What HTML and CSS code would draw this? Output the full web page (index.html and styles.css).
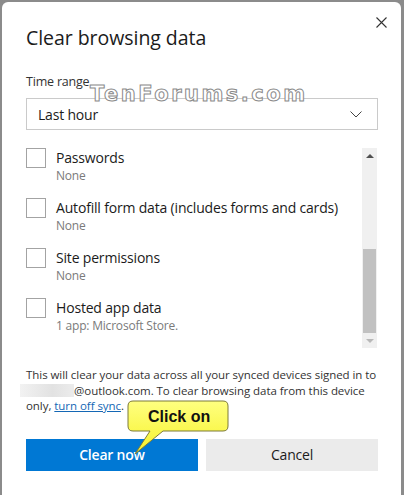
FILE: index.html
```html
<!DOCTYPE html>
<html>
<head>
<meta charset="utf-8">
<link rel="stylesheet" href="styles.css">
</head>
<body>
<div class="dialog">
  <button class="close" aria-label="Close">
    <svg width="11" height="11" viewBox="0 0 11 11"><path d="M0.5 0.5 L10.5 10.5 M10.5 0.5 L0.5 10.5" stroke="#333" stroke-width="1.1" fill="none"/></svg>
  </button>
  <h1 class="title">Clear browsing data</h1>
  <div class="label">Time range</div>
  <div class="select">
    <span>Last hour</span>
    <svg class="chev" width="12" height="7" viewBox="0 0 12 7"><path d="M0.5 0.5 L6 6 L11.5 0.5" stroke="#444" stroke-width="1" fill="none"/></svg>
  </div>
  <div class="watermark">TenForums.com</div>
  <div class="list">
    <div class="items">
      <div class="item"><span class="box"></span><div class="txt"><div class="name">Passwords</div><div class="sub">None</div></div></div>
      <div class="item"><span class="box"></span><div class="txt"><div class="name">Autofill form data (includes forms and cards)</div><div class="sub">None</div></div></div>
      <div class="item"><span class="box"></span><div class="txt"><div class="name">Site permissions</div><div class="sub">None</div></div></div>
      <div class="item"><span class="box"></span><div class="txt"><div class="name">Hosted app data</div><div class="sub">1 app: Microsoft Store.</div></div></div>
    </div>
    <div class="scrollbar">
      <div class="arrow up"></div>
      <div class="track"><div class="thumb"></div></div>
      <div class="arrow down"></div>
    </div>
  </div>
  <p class="note">This will clear your data across all your synced devices signed in to <span class="blur"></span>@outlook.com. To clear browsing data from this device only, <a href="#">turn off sync</a>.</p>
  <div class="buttons">
    <button class="btn primary">Clear now</button>
    <button class="btn secondary">Cancel</button>
  </div>
  <div class="callout">
    <svg width="106" height="60" viewBox="0 0 106 60">
      <defs>
        <linearGradient id="yg" x1="0" y1="0" x2="0" y2="1">
          <stop offset="0" stop-color="#ffff80"/>
          <stop offset="1" stop-color="#f6f22a"/>
        </linearGradient>
      </defs>
      <path d="M7 2 H97 Q102 2 102 7 V27 Q102 32 97 32 H37 L9 55 L24 32 H7 Q2 32 2 27 V7 Q2 2 7 2 Z" fill="url(#yg)" stroke="#7d7a3a" stroke-width="1"/>
    </svg>
    <span class="callout-text">Click on</span>
  </div>
</div>
</body>
</html>
```
FILE: styles.css
```css
html, body { margin: 0; padding: 0; }
body {
  background: #8b8b8b;
  width: 404px;
  height: 495px;
  overflow: hidden;
  font-family: "Open Sans", "Noto Sans", sans-serif;
}
.dialog {
  position: relative;
  margin: 2px 3px 0 2px;
  height: 493px;
  background: #fff;
  border-radius: 6px 6px 0 0;
  padding: 0 23px 0 24px;
  box-sizing: border-box;
  color: #1a1a1a;
}
.close {
  position: absolute;
  right: 14px;
  top: 15px;
  background: none;
  border: 0;
  padding: 0;
  width: 11px;
  height: 11px;
  display: block;
}
.close svg { display: block; }
.title {
  margin: 0;
  padding-top: 22px;
  font-size: 19.5px;
  font-weight: 400;
  line-height: 28px;
  letter-spacing: -0.05px;
  color: #1b1b1b;
}
.label {
  margin-top: 21px;
  font-size: 12.5px;
  line-height: 17px;
  color: #333;
  letter-spacing: -0.2px;
}
.select {
  margin-top: 8px;
  height: 32px;
  border: 1px solid #cacaca;
  box-sizing: border-box;
  display: flex;
  align-items: center;
  justify-content: space-between;
  padding: 0 15px 0 11px;
  font-size: 14px;
  color: #1b1b1b;
  letter-spacing: -0.2px;
}
.chev { display: block; }
.watermark {
  position: absolute;
  left: 88px;
  top: 79px;
  font-family: "DejaVu Sans", sans-serif;
  font-weight: bold;
  font-size: 21px;
  letter-spacing: 2.5px;
  color: #fff;
  -webkit-text-stroke: 1px #8a8a8a;
  line-height: 26px;
}
.list {
  margin-top: 18px;
  height: 200px;
  display: flex;
  justify-content: space-between;
}
.items { display: flex; flex-direction: column; }
.item {
  height: 50px;
  display: flex;
  align-items: flex-start;
}
.box {
  width: 18px;
  height: 18px;
  border: 1px solid #a3a3a3;
  flex: none;
}
.txt { margin-left: 10px; margin-top: 0px; }
.name {
  font-size: 14px;
  line-height: 19px;
  color: #1b1b1b;
  letter-spacing: -0.18px;
}
.sub {
  font-size: 12px;
  line-height: 17px;
  color: #7a7a7a;
  letter-spacing: -0.2px;
}
.scrollbar {
  width: 15px;
  height: 200px;
  background: #f0f0f0;
  display: flex;
  flex-direction: column;
  margin-right: 1px;
}
.arrow {
  height: 15px;
  display: flex;
  align-items: center;
  justify-content: center;
}
.arrow.up::before {
  content: "";
  border-left: 4px solid transparent;
  border-right: 4px solid transparent;
  border-bottom: 4px solid #505050;
}
.arrow.down::before {
  content: "";
  border-left: 4px solid transparent;
  border-right: 4px solid transparent;
  border-top: 4px solid #b8b8b8;
}
.track {
  flex: 1;
  display: flex;
  flex-direction: column;
  justify-content: flex-end;
  padding: 0 1px;
}
.thumb {
  height: 84px;
  background: #c1c1c1;
}
.note {
  margin: 19px 0 0;
  font-size: 11.5px;
  line-height: 15.6px;
  color: #333;
  letter-spacing: -0.05px;
}
.blur {
  display: inline-block;
  width: 54px;
  height: 13px;
  margin-left: -6px;
  vertical-align: -2px;
  background: linear-gradient(90deg, #f2f2f2, #e2e2e2 60%, #ececec);
}
.note a {
  color: #1467b5;
  text-decoration: underline;
}
.buttons {
  margin-top: 25px;
  display: flex;
  gap: 8px;
}
.btn {
  flex: 1;
  height: 32px;
  border: 0;
  font-family: "Open Sans", "Noto Sans", sans-serif;
  font-size: 14px;
  letter-spacing: -0.2px;
  padding: 0;
}
.primary {
  background: #0078d4;
  color: #fff;
  font-weight: 600;
}
.secondary {
  background: #ebebeb;
  color: #1b1b1b;
}
.callout {
  position: absolute;
  left: 124px;
  top: 397px;
  width: 106px;
  height: 60px;
}
.callout svg { display: block; }
.callout-text {
  position: absolute;
  left: 22px;
  top: 8px;
  font-family: "Liberation Sans", Arial, sans-serif;
  font-weight: bold;
  font-size: 16px;
  line-height: 20px;
  color: #111;
}
```
